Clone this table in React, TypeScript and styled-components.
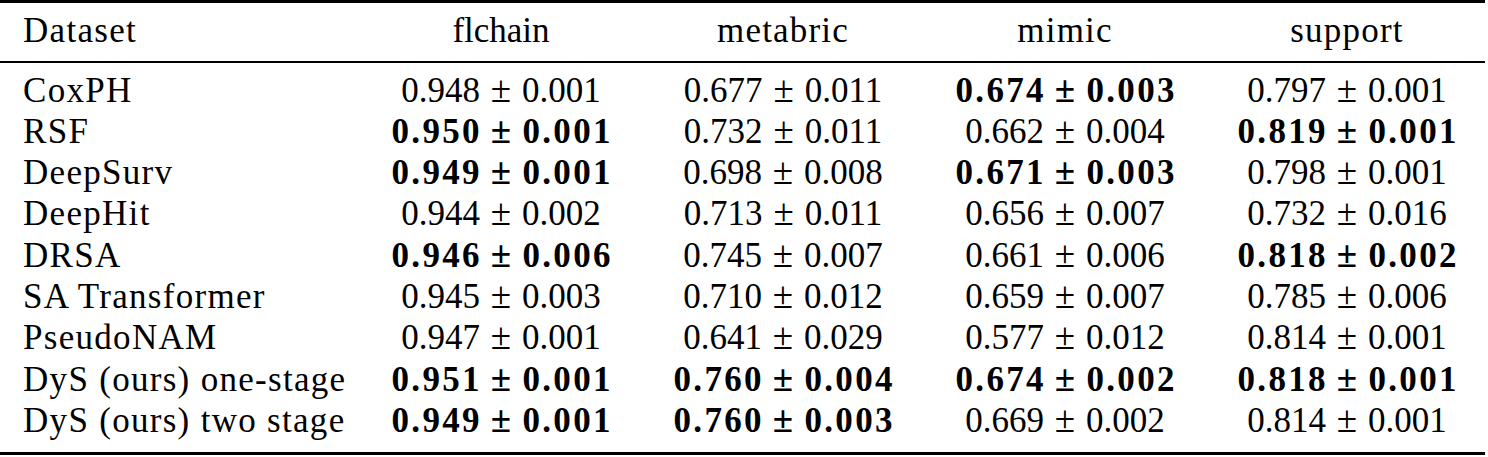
import React from "react";
import styled, { createGlobalStyle } from "styled-components";

const Global = createGlobalStyle`
  html, body {
    margin: 0;
    padding: 0;
    background: #ffffff;
  }
  body {
    font-family: "Liberation Serif", "Times New Roman", serif;
    color: #000;
  }
`;

const Table = styled.div`
  width: 1488px;
  display: flex;
  flex-direction: column;
  font-family: "Liberation Serif", "Times New Roman", serif;
  font-size: 35px;
  color: #000;
`;

const Rule = styled.div<{ $heavy?: boolean }>`
  width: 1485px;
  height: ${(p) => (p.$heavy ? 3 : 2)}px;
  background: #000;
`;

const Section = styled.div<{ $top: number; $bottom: number }>`
  display: flex;
  flex-direction: column;
  padding-top: ${(p) => p.$top}px;
  padding-bottom: ${(p) => p.$bottom}px;
`;

const Row = styled.div`
  display: grid;
  grid-template-columns: 360px repeat(4, 282px);
  height: 41.3px;
  line-height: 41.3px;
  white-space: nowrap;
`;

const LabelCell = styled.div`
  padding-left: 23px;
  letter-spacing: 1.3px;
  text-align: left;
`;

const HeadCell = styled.div<{ $spaced?: boolean }>`
  text-align: center;
  letter-spacing: ${(p) => (p.$spaced ? "1.2px" : "0")};
`;

const ValueCell = styled.div`
  display: flex;
  justify-content: center;
  align-items: baseline;
`;

const Num = styled.span<{ $bold?: boolean }>`
  font-weight: ${(p) => (p.$bold ? 700 : 400)};
  letter-spacing: ${(p) => (p.$bold ? "2.3px" : "0")};
  margin-right: ${(p) => (p.$bold ? "-2.3px" : "0")};
`;

const Pm = styled.span<{ $bold?: boolean }>`
  display: inline-block;
  width: ${(p) => (p.$bold ? 31 : 27)}px;
  margin: 0 ${(p) => (p.$bold ? 6 : 7.6)}px;
  text-align: center;
  line-height: 1;
  font-size: 37px;
  font-weight: ${(p) => (p.$bold ? 700 : 400)};
`;

type Val = [string, boolean];

const rows: [string, Val, Val, Val, Val][] = [
  ["CoxPH", ["0.948 ± 0.001", false], ["0.677 ± 0.011", false], ["0.674 ± 0.003", true], ["0.797 ± 0.001", false]],
  ["RSF", ["0.950 ± 0.001", true], ["0.732 ± 0.011", false], ["0.662 ± 0.004", false], ["0.819 ± 0.001", true]],
  ["DeepSurv", ["0.949 ± 0.001", true], ["0.698 ± 0.008", false], ["0.671 ± 0.003", true], ["0.798 ± 0.001", false]],
  ["DeepHit", ["0.944 ± 0.002", false], ["0.713 ± 0.011", false], ["0.656 ± 0.007", false], ["0.732 ± 0.016", false]],
  ["DRSA", ["0.946 ± 0.006", true], ["0.745 ± 0.007", false], ["0.661 ± 0.006", false], ["0.818 ± 0.002", true]],
  ["SA Transformer", ["0.945 ± 0.003", false], ["0.710 ± 0.012", false], ["0.659 ± 0.007", false], ["0.785 ± 0.006", false]],
  ["PseudoNAM", ["0.947 ± 0.001", false], ["0.641 ± 0.029", false], ["0.577 ± 0.012", false], ["0.814 ± 0.001", false]],
  ["DyS (ours) one-stage", ["0.951 ± 0.001", true], ["0.760 ± 0.004", true], ["0.674 ± 0.002", true], ["0.818 ± 0.001", true]],
  ["DyS (ours) two stage", ["0.949 ± 0.001", true], ["0.760 ± 0.003", true], ["0.669 ± 0.002", false], ["0.814 ± 0.001", false]],
];

const Value: React.FC<{ v: Val }> = ({ v }) => {
  const [text, bold] = v;
  const [a, b] = text.split(" ± ");
  return (
    <ValueCell>
      <Num $bold={bold}>{a}</Num>
      <Pm $bold={bold}>±</Pm>
      <Num $bold={bold}>{b}</Num>
    </ValueCell>
  );
};

export default function App() {
  return (
    <>
      <Global />
      <Table>
        <Rule $heavy />
        <Section $top={6.6} $bottom={10.1}>
          <Row>
            <LabelCell>Dataset</LabelCell>
            <HeadCell>flchain</HeadCell>
            <HeadCell $spaced>metabric</HeadCell>
            <HeadCell $spaced>mimic</HeadCell>
            <HeadCell $spaced>support</HeadCell>
          </Row>
        </Section>
        <Rule />
        <Section $top={6.6} $bottom={10.7}>
          {rows.map((r) => (
            <Row key={r[0]}>
              <LabelCell>{r[0]}</LabelCell>
              <Value v={r[1]} />
              <Value v={r[2]} />
              <Value v={r[3]} />
              <Value v={r[4]} />
            </Row>
          ))}
        </Section>
        <Rule $heavy />
      </Table>
    </>
  );
}
